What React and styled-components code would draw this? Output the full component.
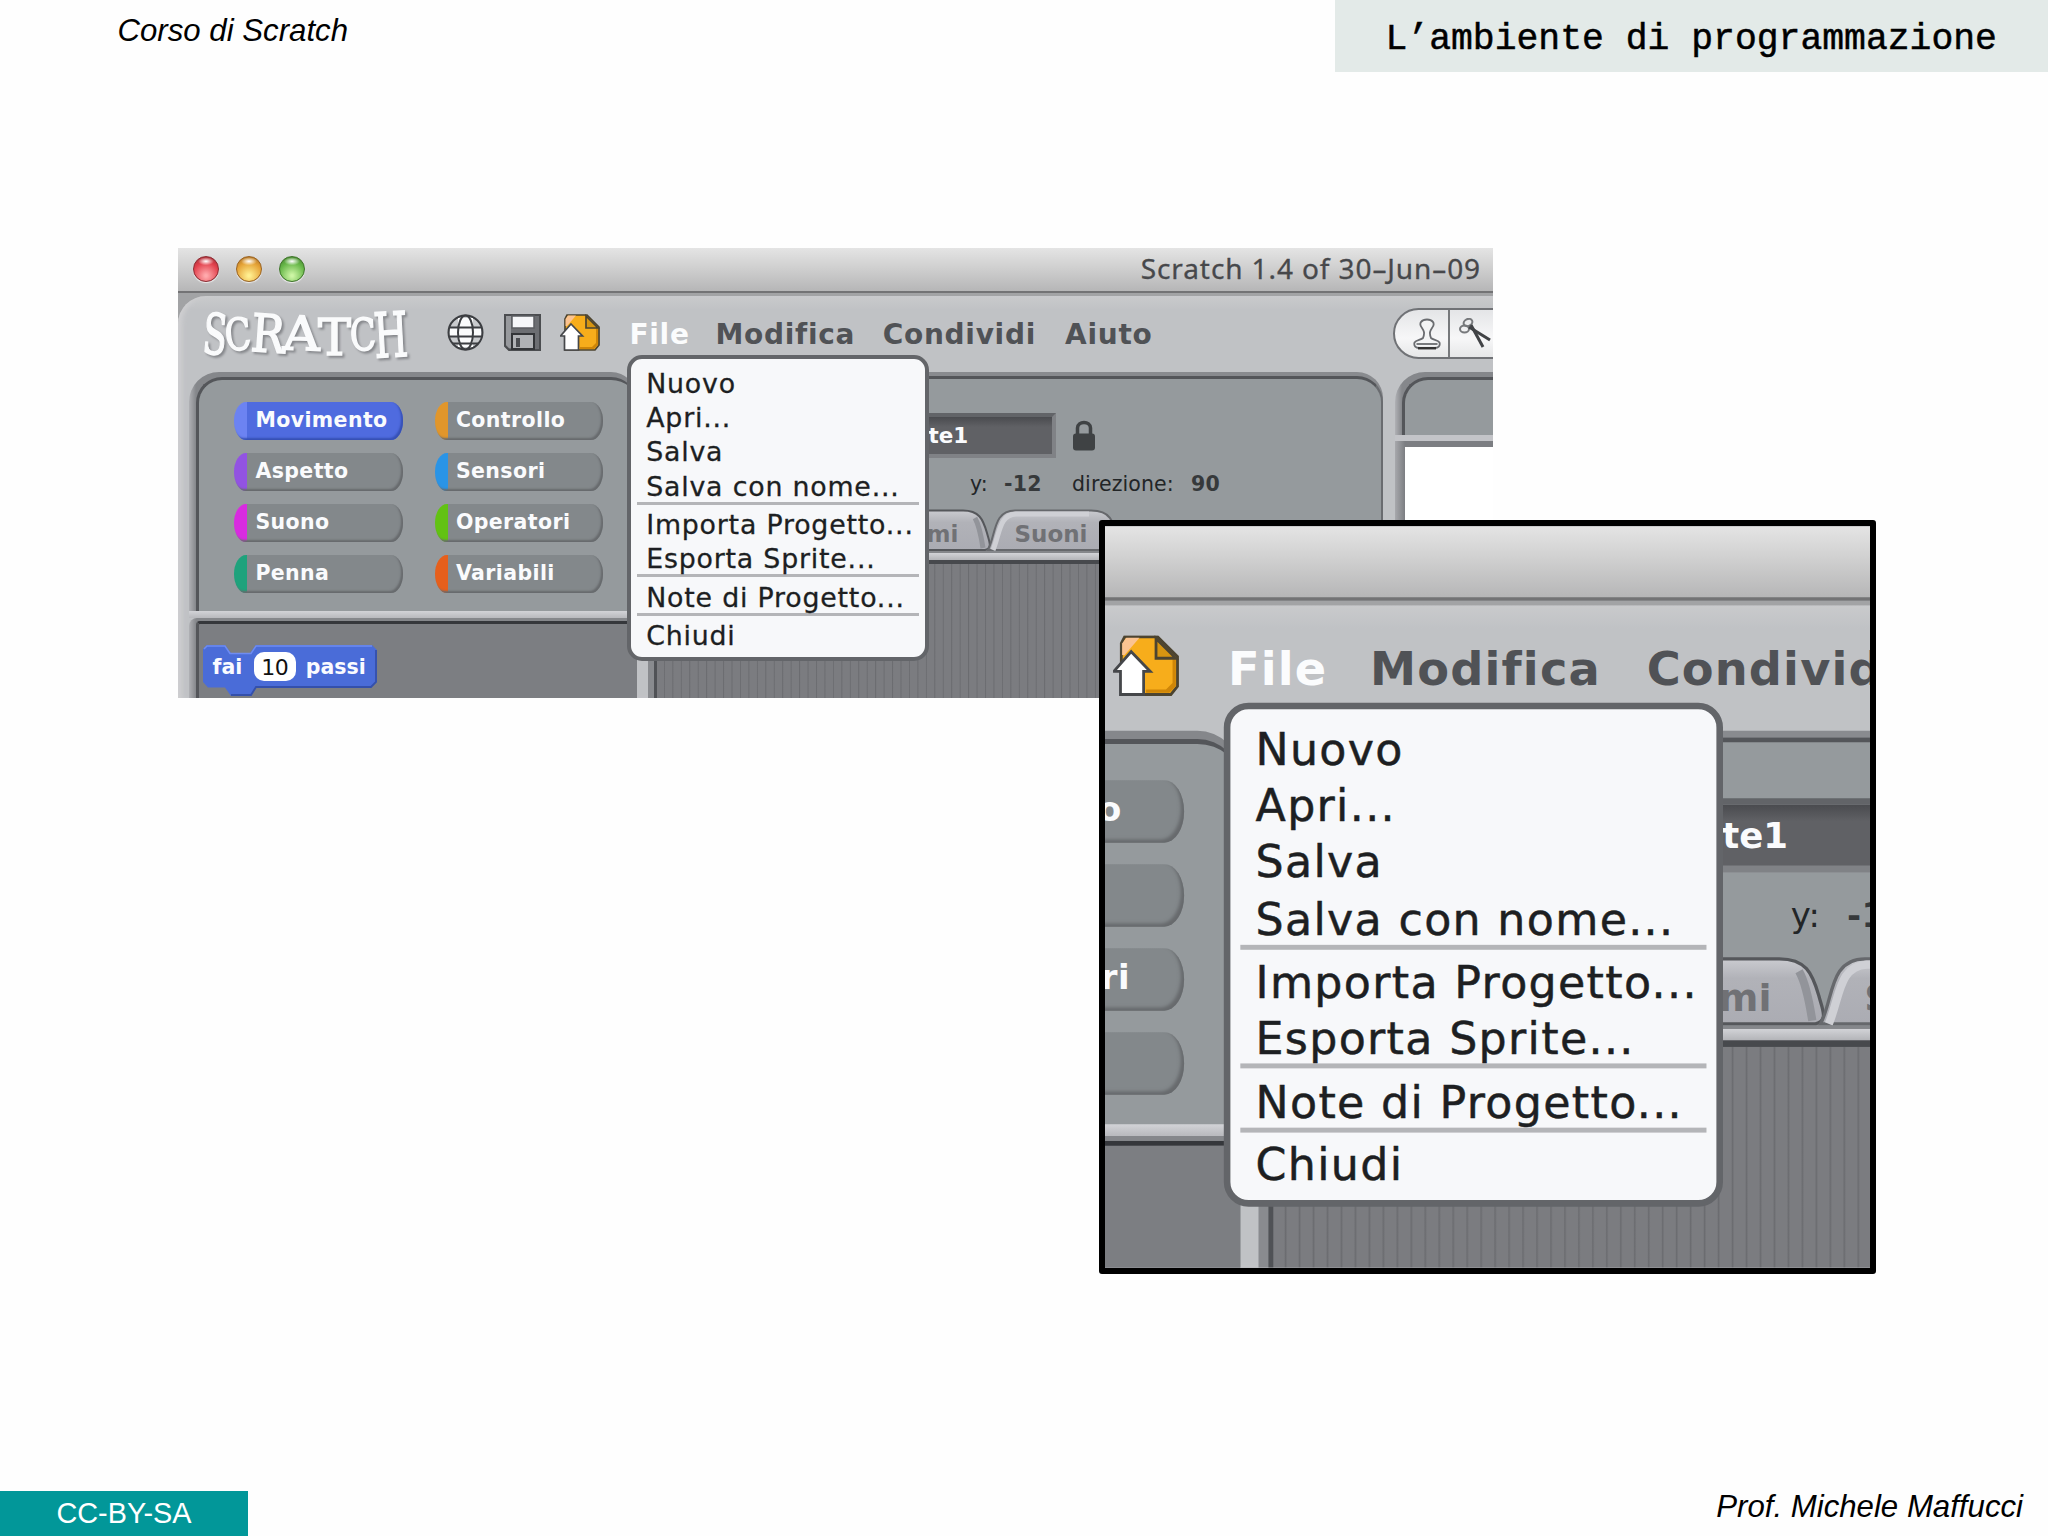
import styled, { createGlobalStyle } from "styled-components";

const GlobalStyle = createGlobalStyle`
  body {
    margin: 0;
    background: #fefefe;
  }
  * {
    box-sizing: border-box;
  }
`;

const categories = [
  { name: "Movimento", color: "#4a6cd4", active: true },
  { name: "Controllo", color: "#e1962b" },
  { name: "Aspetto", color: "#9253e2" },
  { name: "Sensori", color: "#2a94e6" },
  { name: "Suono", color: "#d82be0" },
  { name: "Operatori", color: "#62c213" },
  { name: "Penna", color: "#1fa27c" },
  { name: "Variabili", color: "#e65f1c" },
];

const fileMenu = [
  ["Nuovo", "Apri...", "Salva", "Salva con nome..."],
  ["Importa Progetto...", "Esporta Sprite..."],
  ["Note di Progetto..."],
  ["Chiudi"],
];

const logoLetters = [
  { ch: "S", x: 0, y: 46, w: 24, r: 5, size: 56 },
  { ch: "C", x: 22, y: 42, w: 26, r: -5, size: 44 },
  { ch: "R", x: 48, y: 44, w: 34, r: 4, size: 52 },
  { ch: "A", x: 80, y: 42, w: 37, r: 2, size: 47 },
  { ch: "T", x: 115, y: 47, w: 33, r: 0, size: 50 },
  { ch: "C", x: 147, y: 42, w: 26, r: -3, size: 44 },
  { ch: "H", x: 171, y: 49, w: 34, r: -3, size: 62 },
];

/* ---------- icons ---------- */

const Logo = () => (
  <LogoSvg viewBox="0 0 206 56">
    {logoLetters.map((l, i) => (
      <text
        key={i}
        x={l.x}
        y={l.y}
        fontSize={l.size}
        textLength={l.w}
        lengthAdjust="spacingAndGlyphs"
        transform={`rotate(${l.r} ${l.x + l.w / 2} 28)`}
      >
        {l.ch}
      </text>
    ))}
  </LogoSvg>
);

const GlobeIcon = () => (
  <svg width="37" height="37" viewBox="0 0 37 37" fill="none" stroke="#3c3e42" strokeWidth="2">
    <circle cx="18.5" cy="18.5" r="17" fill="#c9cbce" />
    <path d="M11 4H26V33H11ZM3 14H34V23H3Z" fill="#fafbfc" stroke="none" />
    <ellipse cx="18.5" cy="18.5" rx="7.5" ry="17" />
    <path d="M3 13.500H34M1.500 22.500H35.500M6 29.500H31" />
  </svg>
);

const DiskIcon = () => (
  <svg width="37" height="37" viewBox="0 0 37 37">
    <path d="M1 1H36V36H5L1 32Z" fill="#6c6e72" stroke="#4b4d50" strokeWidth="2" />
    <path d="M2 2H7V34H5L2 31Z" fill="#97999d" />
    <rect x="8" y="2" width="22" height="12" fill="#f6f7f9" stroke="#5b5d61" strokeWidth="1.5" />
    <rect x="8" y="20" width="22" height="15" fill="#b0b2b5" stroke="#333538" strokeWidth="2" />
    <rect x="12" y="24" width="4" height="9" fill="#4b4d51" />
  </svg>
);

const ShareIcon = () => (
  <svg width="40" height="37" viewBox="0 0 40 37">
    <path d="M7 1H27L39 13V31L35 36H5V5Z" fill="#f7ad1b" stroke="#4c4431" strokeWidth="1.7" />
    <path d="M5.5 12V5L8 1.5H16L7 12Z" fill="#fbc391" />
    <path d="M36 14H38V31L34 35H20V33H32L36 29Z" fill="#cf8608" />
    <path d="M26 2V14H38Z" fill="#d79511" stroke="#4c4431" strokeWidth="1.7" />
    <path d="M11 10L22.5 22H18.5V36H4.5V22H0.5Z" fill="#fff" stroke="#45474a" strokeWidth="1.7" />
  </svg>
);

const StampIcon = () => (
  <svg width="28" height="32" viewBox="0 0 28 32" fill="#f3f4f5" stroke="#6a6c70" strokeWidth="1.8">
    <path d="M10 20C12 15 11 13 9 10C5 5 9 1.5 14 1.5S23 5 19 10C17 13 16 15 18 20C20 22 25 22 26.500 24.500C27.500 28 25 30 22 30H6C3 30 0.500 28 1.500 24.500C3 22 8 22 10 20Z" />
    <path d="M3.500 26H24.500" />
    <path d="M5 30.200H23" stroke="#333" strokeWidth="2.500" />
  </svg>
);

const ScissorsIcon = () => (
  <svg width="32" height="32" viewBox="0 0 32 32" fill="none" stroke="#77797c" strokeWidth="2">
    <ellipse cx="9" cy="4.500" rx="4.500" ry="3.500" transform="rotate(-25 9 4.500)" />
    <ellipse cx="5.500" cy="11" rx="4.500" ry="3.500" />
    <path d="M10 9L31 22" stroke="#414346" strokeWidth="3" />
    <path d="M12 7L24 29" stroke="#414346" strokeWidth="3" />
  </svg>
);

const LockIcon = () => (
  <svg width="22" height="31" viewBox="0 0 22 31">
    <path d="M4.500 15V8C4.500 0.500 17.500 0.500 17.500 8V15" fill="none" stroke="#3f4244" strokeWidth="3.500" />
    <rect x="0" y="13.500" width="22" height="17" rx="3" fill="#3f4244" />
  </svg>
);

const TabsShape = () => (
  <TabsSvg viewBox="0 0 480 42" width="480" height="42">
    <defs>
      <linearGradient id="tab" x1="0" y1="0" x2="0" y2="1">
        <stop offset="0" stopColor="#cacbd0" />
        <stop offset="0.300" stopColor="#b1b2b8" />
        <stop offset="1" stopColor="#abacb3" />
      </linearGradient>
    </defs>
    <path d="M200 41V1.500H304C320 1.500 324 10 328 24C330 32 334 39 326 41Z" fill="url(#tab)" stroke="#55575b" strokeWidth="2" />
    <path d="M316 9C320 16 322 26 324 39" fill="none" stroke="#92949a" strokeWidth="5" />
    <path d="M329 41C337 26 334 1.500 356 1.500H432C450 1.500 455 8 460 41Z" fill="url(#tab)" stroke="#66686c" strokeWidth="2" />
    <path d="M334 41C341 24 340 6 357 5H430" fill="none" stroke="#cfd0d5" strokeWidth="5" />
  </TabsSvg>
);

const BlockShape = () => (
  <BlockSvg viewBox="0 0 174 51" width="174" height="51">
    <path
      d="M4 0H22L28 8H47L53 0H169L174 5V37L168 42.500H53L48 51H28L22 42.500H5L0 37V4Z"
      fill="#4a6cd8"
    />
    <path d="M1 4L4 1H22L27 8.500H48L53 1H169" fill="none" stroke="#6f8cf0" strokeWidth="1.500" />
    <path d="M173 5V37L168 42H53L48 50H28" fill="none" stroke="#3450ab" strokeWidth="1.800" />
  </BlockSvg>
);

/* ---------- scratch window, drawn once at full size and once enlarged ---------- */

const ScratchWindow = () => (
  <Window>
    <TitleBar>
      <Lights>
        <Light $edge="#8e2a31" $color="#e2404c" $glow="#ffa9ac" />
        <Light $edge="#9a6220" $color="#e5a236" $glow="#ffef90" />
        <Light $edge="#3d7528" $color="#66b648" $glow="#ccf5a4" />
      </Lights>
      <WindowTitle>Scratch 1.4 of 30–Jun–09</WindowTitle>
    </TitleBar>
    <Chrome>
      <ToolBar>
        <Logo />
        <ToolIcons>
          <GlobeIcon />
          <DiskIcon />
          <ShareIcon />
        </ToolIcons>
        <MenuWord $width={86} $open>File</MenuWord>
        <MenuWord $width={167.300}>Modifica</MenuWord>
        <MenuWord $width={182.300}>Condividi</MenuWord>
        <MenuWord $width={328}>Aiuto</MenuWord>
        <Pill>
          <PillCell><StampIcon /></PillCell>
          <PillCell $last><ScissorsIcon /></PillCell>
        </Pill>
      </ToolBar>
      <Columns>
        <LeftColumn>
          <Rim $height={239} $round>
            <Well $round>
              <Categories>
                {categories.map((c) => (
                  <Category key={c.name} $color={c.color} $active={c.active}>
                    {c.name}
                  </Category>
                ))}
              </Categories>
            </Well>
          </Rim>
          <Bar />
          <Rim $height={80}>
            <Well $dark>
              <Block>
                <BlockShape />
                <BlockText>fai</BlockText>
                <BlockInput>10</BlockInput>
                <BlockText>passi</BlockText>
              </Block>
            </Well>
          </Rim>
        </LeftColumn>
        <MiddleColumn>
          <SpriteInfo>
            <NameRow>
              <NameField>te1</NameField>
              <LockIcon />
            </NameRow>
            <Coords>
              <Coord $width={76} />
              <Coord $width={34}>y:</Coord>
              <Coord $width={68} $bold>-12</Coord>
              <Coord $width={119}>direzione:</Coord>
              <Coord $bold>90</Coord>
            </Coords>
            <TabRow>
              <TabsShape />
              <TabName $width={88}>mi</TabName>
              <TabName>Suoni</TabName>
            </TabRow>
          </SpriteInfo>
          <TabBase />
          <Scripts />
        </MiddleColumn>
        <RightColumn>
          <Rim $height={63} $round>
            <Well $round $open />
          </Rim>
          <StageBar />
          <StageRim>
            <Stage />
          </StageRim>
        </RightColumn>
      </Columns>
    </Chrome>
    <DropDown>
      {fileMenu.map((group, i) => (
        <MenuGroup key={i}>
          {group.map((item) => (
            <MenuItem key={item}>{item}</MenuItem>
          ))}
        </MenuGroup>
      ))}
    </DropDown>
  </Window>
);

const App = () => {
  return (
    <Slide>
      <GlobalStyle />
      <Header>
        <Course>Corso di Scratch</Course>
        <Topic>L’ambiente di programmazione</Topic>
      </Header>
      <Content>
        <ScratchWindow />
      </Content>
      <Magnifier>
        <Enlarged>
          <ScratchWindow />
        </Enlarged>
      </Magnifier>
      <Footer>
        <Licence>CC-BY-SA</Licence>
        <Author>Prof. Michele Maffucci</Author>
      </Footer>
    </Slide>
  );
};

export default App;

const Slide = styled.div`
  position: relative;
  display: flex;
  flex-direction: column;
  width: 2048px;
  height: 1536px;
  overflow: hidden;
  background: #fefefe;
  color: #000;
  font-family: "Liberation Sans", Arial, sans-serif;
`;

const Header = styled.div`
  display: flex;
  justify-content: space-between;
  height: 72px;
`;

const Course = styled.div`
  padding: 13px 0 0 117.5px;
  font-size: 31.2px;
  font-style: italic;
  line-height: 36px;
`;

const Topic = styled.div`
  width: 713px;
  padding: 19px 0 0 50.5px;
  background: #e3eae8;
  font-family: "Liberation Mono", monospace;
  font-size: 36.4px;
  line-height: 42px;
  white-space: nowrap;
  -webkit-text-stroke: 0.5px #000;
`;

const Content = styled.div`
  flex: 1;
  padding: 176px 0 0 178px;
`;

const Magnifier = styled.div`
  position: absolute;
  left: 1099px;
  top: 520px;
  width: 777px;
  height: 754px;
  border: 6px solid #000;
  border-radius: 3px;
  background: #e3e3e4;
  overflow: hidden;
`;

const Enlarged = styled.div`
  width: 1315px;
  transform-origin: 0 0;
  transform: translate(-623.4px, 0.5px) scale(1.653, 1.647);
`;

const Footer = styled.div`
  display: flex;
  justify-content: space-between;
  height: 45px;
`;

const Licence = styled.div`
  width: 248px;
  background: #029799;
  color: #fff;
  font-size: 28.8px;
  line-height: 45px;
  text-align: center;
`;

const Author = styled.div`
  padding-right: 25px;
  font-size: 31.2px;
  font-style: italic;
  line-height: 32px;
`;

const Window = styled.div`
  position: relative;
  width: 1315px;
  height: 450px;
  overflow: hidden;
  background: #a2a3a5;
  font-family: "DejaVu Sans", Verdana, sans-serif;
`;

const TitleBar = styled.div`
  display: flex;
  justify-content: space-between;
  height: 45px;
  padding: 0 12px 0 15px;
  border-bottom: 2px solid #737375;
  background: linear-gradient(#e4e4e4, #d0d0d0 45%, #b6b6b7);
`;

const Lights = styled.div`
  display: flex;
  gap: 17px;
  padding-top: 8px;
`;

const Light = styled.div`
  width: 26px;
  height: 26px;
  border: 1.5px solid ${(p) => p.$edge};
  border-radius: 50%;
  background:
    radial-gradient(ellipse 8px 4px at 50% 18%, #fff, transparent),
    radial-gradient(circle at 50% 78%, ${(p) => p.$glow} 5%, ${(p) => p.$color} 60%, ${(p) => p.$edge} 100%);
  box-shadow: 0 1px 1px #eee;
`;

const WindowTitle = styled.div`
  color: #47484b;
  font-family: "Noto Sans", sans-serif;
  font-size: 28px;
  letter-spacing: 0.9px;
  line-height: 41px;
  -webkit-text-stroke: 0.3px #47484b;
`;

const Chrome = styled.div`
  height: 402px;
  margin-top: 3px;
  border-radius: 28px 0 0 0;
  background: linear-gradient(#c9cacc, #c0c2c5 14px);
  box-shadow: inset 6px 0 5px -2px #cfcfd1;
`;

const ToolBar = styled.div`
  display: flex;
  align-items: center;
  height: 76px;
  padding: 0 0 3px 25px;
`;

const LogoSvg = styled.svg`
  flex: none;
  width: 206px;
  height: 56px;
  margin-top: 6px;
  fill: #fafbfc;
  stroke: #fafbfc;
  stroke-width: 1.6px;
  font-family: "DejaVu Serif", serif;
  overflow: visible;
  filter: drop-shadow(2px 2px 1px #85878b);
`;

const ToolIcons = styled.div`
  display: flex;
  flex: none;
  gap: 19.5px;
  width: 220.500px;
  padding-left: 38px;
`;

const MenuWord = styled.div`
  flex: none;
  width: ${(p) => p.$width}px;
  padding-top: 3px;
  color: ${(p) => (p.$open ? "#fbfcfd" : "#505256")};
  font-size: 28px;
  font-weight: bold;
  letter-spacing: 0.7px;
`;

const Pill = styled.div`
  display: flex;
  flex: none;
  width: 120px;
  height: 51px;
  margin-top: 2px;
  border: 2.5px solid #707276;
  border-radius: 26px 0 0 26px;
  background: linear-gradient(#e4e5e7, #f7f7f8 60%, #e6e7e8);
`;

const PillCell = styled.div`
  display: flex;
  align-items: center;
  flex: none;
  width: ${(p) => (p.$last ? 60 : 55)}px;
  padding-left: ${(p) => (p.$last ? 9 : 18)}px;
  border-right: 2px solid #77797c;
`;

const Columns = styled.div`
  display: flex;
  height: 326px;
  padding-left: 11px;
`;

const LeftColumn = styled.div`
  width: 448px;
`;

const Rim = styled.div`
  height: ${(p) => p.$height}px;
  padding: ${(p) => (p.$round ? "5px 0 0 7px" : "3px 0 0 7px")};
  border-radius: ${(p) => (p.$round ? "30px 26px 0 0" : "8px 0 0 0")};
  background: linear-gradient(90deg, #b0b1b5, #85878b 7px);
`;

const Well = styled.div`
  height: 100%;
  border-top: 3px solid ${(p) => (p.$dark ? "#35373b" : "#54565a")};
  border-left: 3px solid #54565a;
  border-radius: ${(p) => (p.$round ? (p.$open ? "26px 0 0 0" : "26px 26px 0 0") : "4px 0 0 0")};
  background: ${(p) => (p.$dark ? "#7c7e82" : "#959a9d")};
`;

const Categories = styled.div`
  display: grid;
  grid-template-columns: 168.500px 168.500px;
  gap: 13.300px 32px;
  padding: 21.5px 0 0 35px;
`;

const Category = styled.div`
  height: 38px;
  padding-left: 21.4px;
  border-radius: 12px / 19px;
  background: linear-gradient(
    90deg,
    ${(p) => (p.$active ? "#6c83f2" : p.$color)} 13px,
    ${(p) => (p.$active ? "#4f6bdf" : "#83888b")} 13px
  );
  box-shadow: inset -2px -2px 2px ${(p) => (p.$active ? "#3650b4" : "#676a6d")};
  color: #fafbfd;
  font-size: 20.5px;
  font-weight: bold;
  letter-spacing: 0.4px;
  line-height: 36px;
`;

const Bar = styled.div`
  height: 7px;
  background: linear-gradient(#d2d3d7, #b8b9bd);
`;

const Block = styled.div`
  position: relative;
  display: flex;
  width: 174px;
  height: 51px;
  margin: 21px 0 0 3.5px;
  padding: 7px 0 0 10px;
`;

const BlockSvg = styled.svg`
  position: absolute;
  left: 0;
  top: 0;
`;

const BlockText = styled.span`
  position: relative;
  color: #fafbff;
  font-size: 20.5px;
  font-weight: bold;
  line-height: 31px;
`;

const BlockInput = styled.span`
  position: relative;
  width: 42px;
  height: 29px;
  margin: 0 10px 0 11.5px;
  border-radius: 10px;
  background: #fff;
  color: #111;
  font-size: 22px;
  letter-spacing: -0.5px;
  line-height: 32px;
  text-align: center;
`;

const MiddleColumn = styled.div`
  display: flex;
  flex-direction: column;
  width: 735px;
  margin-left: 11px;
  padding-top: 4px;
  border-radius: 26px 26px 0 0;
  background: #898b8f;
`;

const SpriteInfo = styled.div`
  height: 175px;
  padding-top: 34px;
  border-top: 3px solid #54565a;
  border-right: 2px solid #6a6c70;
  border-radius: 26px 26px 0 0;
  background: #959a9d;
`;

const NameRow = styled.div`
  display: flex;
  align-items: center;
  gap: 17px;
  height: 45px;
`;

const NameField = styled.div`
  width: 407.500px;
  height: 45px;
  padding-left: 276.500px;
  border: 4px solid #808286;
  border-top-color: #626468;
  background: linear-gradient(#4a4b4f, #606165 10px);
  color: #fafbfd;
  font-size: 21.5px;
  font-weight: bold;
  line-height: 38px;
`;

const Coords = styled.div`
  display: flex;
  height: 40px;
  padding: 12px 0 0 246px;
`;

const Coord = styled.span`
  width: ${(p) => (p.$width ? p.$width + "px" : "auto")};
  color: ${(p) => (p.$bold ? "#36393b" : "#222527")};
  font-size: 20.5px;
  font-weight: ${(p) => (p.$bold ? "bold" : "normal")};
  letter-spacing: ${(p) => (p.$bold ? "0.3px" : "0.1px")};
  line-height: 28px;
`;

const TabRow = styled.div`
  position: relative;
  display: flex;
  height: 54px;
  padding: 22px 0 0 278.500px;
`;

const TabsSvg = styled.svg`
  position: absolute;
  left: 11px;
  top: 11px;
`;

const TabName = styled.span`
  position: relative;
  width: ${(p) => (p.$width ? p.$width + "px" : "auto")};
  color: #707175;
  font-size: 23px;
  font-weight: bold;
  line-height: 28px;
`;

const TabBase = styled.div`
  height: 13px;
  border-top: 2px solid #85878b;
  border-bottom: 4px solid #47494d;
  background: linear-gradient(#d2d3d7, #b3b4b8);
`;

const Scripts = styled.div`
  flex: 1;
  margin-left: 6px;
  border-left: 3px solid #505256;
  background: repeating-linear-gradient(90deg, #7b7c80 0 6.5px, #6b6c70 7.3px, #7b7c80 8.45px);
`;

const RightColumn = styled.div`
  flex: 1;
  margin-left: 12px;
  overflow: hidden;

  ${Rim} {
    border-radius: 30px 0 0 0;
  }
`;

const StageBar = styled.div`
  height: 6px;
  background: #c3c4c8;
`;

const StageRim = styled.div`
  padding: 6px 0 0 10px;
  background: linear-gradient(90deg, #a7a8ac, #7c7e82 10px);
`;

const Stage = styled.div`
  height: 251px;
  background: #fff;
`;

const DropDown = styled.div`
  position: absolute;
  left: 449px;
  top: 107px;
  width: 302px;
  height: 306px;
  padding: 8px 6px 0;
  border: 4px solid #636569;
  border-radius: 15px;
  background: #f7f8fa;
`;

const MenuGroup = styled.div`
  & + &::before {
    content: "";
    display: block;
    height: 3px;
    margin: -2px 0 3.2px;
    background: #b4b5b8;
  }
`;

const MenuItem = styled.div`
  padding-left: 9.2px;
  color: #1d1f22;
  font-size: 26.8px;
  letter-spacing: 0.8px;
  line-height: 34.2px;
  white-space: nowrap;
  -webkit-text-stroke: 0.3px #1d1f22;
`;
